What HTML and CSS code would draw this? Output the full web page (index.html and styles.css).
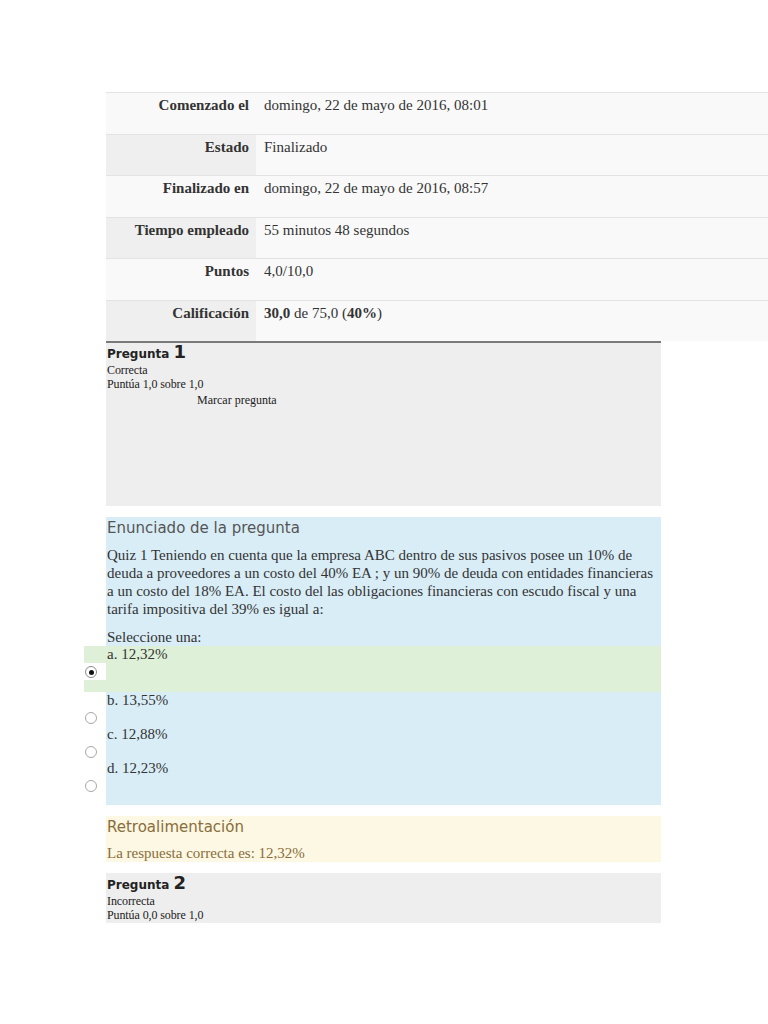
FILE: index.html
```html
<!DOCTYPE html>
<html lang="es">
<head>
<meta charset="utf-8">
<title>Revisión del intento</title>
<link rel="stylesheet" href="styles.css">
</head>
<body>
<div class="page">
  <div class="summary">
    <div class="row odd"><div class="th">Comenzado el</div><div class="td">domingo, 22 de mayo de 2016, 08:01</div></div>
    <div class="row even"><div class="th">Estado</div><div class="td">Finalizado</div></div>
    <div class="row odd"><div class="th">Finalizado en</div><div class="td">domingo, 22 de mayo de 2016, 08:57</div></div>
    <div class="row even"><div class="th">Tiempo empleado</div><div class="td">55 minutos 48 segundos</div></div>
    <div class="row odd"><div class="th">Puntos</div><div class="td">4,0/10,0</div></div>
    <div class="row even"><div class="th">Calificación</div><div class="td"><b>30,0</b> de 75,0 (<b>40%</b>)</div></div>
  </div>

  <div class="qinfo first">
    <div class="qno">Pregunta <span class="num">1</span></div>
    <div class="small">Correcta</div>
    <div class="small">Puntúa 1,0 sobre 1,0</div>
    <div class="flag">Marcar pregunta</div>
  </div>

  <div class="content">
    <div class="heading">Enunciado de la pregunta</div>
    <p class="qtext">Quiz 1 Teniendo en cuenta que la empresa ABC dentro de sus pasivos posee un 10% de deuda a proveedores a un costo del 40% EA ; y un 90% de deuda con entidades financieras a un costo del 18% EA. El costo del las obligaciones financieras con escudo fiscal y una tarifa impositiva del 39% es igual a:</p>
    <div class="prompt">Seleccione una:</div>
    <div class="answers">
      <div class="answer correct">
        <div class="label">a. 12,32%</div>
        <div class="radiobox"><span class="radio checked"></span></div>
      </div>
      <div class="answer">
        <div class="label">b. 13,55%</div>
        <div class="radiobox"><span class="radio"></span></div>
      </div>
      <div class="answer">
        <div class="label">c. 12,88%</div>
        <div class="radiobox"><span class="radio"></span></div>
      </div>
      <div class="answer">
        <div class="label">d. 12,23%</div>
        <div class="radiobox"><span class="radio"></span></div>
      </div>
    </div>
  </div>

  <div class="feedback">
    <div class="heading fb">Retroalimentación</div>
    <div class="fbtext">La respuesta correcta es: 12,32%</div>
  </div>

  <div class="qinfo second">
    <div class="qno">Pregunta <span class="num">2</span></div>
    <div class="small">Incorrecta</div>
    <div class="small">Puntúa 0,0 sobre 1,0</div>
  </div>
</div>
</body>
</html>
```

FILE: styles.css
```css
html, body {
  margin: 0;
  padding: 0;
  background: #ffffff;
  overflow: hidden;
}

body {
  font-family: "Liberation Serif", "Times New Roman", serif;
  color: #333333;
  font-size: 15px;
}

.page {
  padding-top: 92px;
  padding-left: 106px;
}

/* Summary table */
.summary {
  width: 100%;
}

.row {
  display: grid;
  grid-template-columns: 150px 1fr;
  height: 41.5px;
  box-sizing: border-box;
  border-top: 1px solid #e3e3e3;
  line-height: 18px;
}

.th {
  font-weight: bold;
  text-align: right;
  padding: 3px 7px 0 0;
  background: #f9f9f9;
}

.td {
  padding: 3px 0 0 8px;
  background: #f9f9f9;
}

.row.even .th {
  background: #efefef;
}

/* Question info block */
.qinfo {
  width: 555px;
  background: #eeeeee;
  box-sizing: border-box;
}

.qinfo.first {
  border-top: 2px solid #7a7a7a;
  height: 165px;
}

.qinfo.second {
  margin-top: 11px;
  height: 50px;
  padding-top: 1px;
}

.qno {
  font-family: "DejaVu Sans", Verdana, sans-serif;
  font-weight: bold;
  font-size: 12px;
  line-height: 18px;
  color: #222;
  padding-left: 1px;
}

.qno .num {
  font-size: 18px;
}

.small {
  font-size: 12px;
  line-height: 14px;
  color: #222;
  letter-spacing: -0.1px;
  padding-left: 1px;
}

.flag {
  font-size: 12px;
  line-height: 15px;
  color: #222;
  padding-top: 2px;
  padding-left: 91px;
}

/* Question content */
.content {
  width: 555px;
  margin-top: 11px;
  background: #d9edf7;
  padding-bottom: 11px;
}

.heading {
  font-family: "DejaVu Sans", Verdana, sans-serif;
  font-size: 15px;
  line-height: 20px;
  color: #555555;
  padding-top: 1px;
  padding-left: 1px;
}

.qtext {
  margin: 8px 0 0;
  line-height: 18px;
  padding-left: 1px;
  padding-right: 0;
}

.prompt {
  margin-top: 10px;
  line-height: 18px;
  padding-left: 1px;
}

.answers {
  margin-left: -22px;
}

.answer {
  height: 34px;
}

.answer.correct {
  height: 46px;
  background: #dff0d8;
}

.answer .label {
  padding-left: 23px;
  line-height: 17px;
}

.radiobox {
  width: 22px;
  height: 17px;
  background: #ffffff;
  position: relative;
}

.radio {
  position: absolute;
  left: 1px;
  top: 3px;
  width: 10px;
  height: 10px;
  border-radius: 50%;
  border: 1px solid #a8a8a8;
  background: #fff;
  box-sizing: content-box;
}

.radio.checked {
  border-color: #8a8a8a;
}

.radio.checked::after {
  content: "";
  position: absolute;
  left: 2.5px;
  top: 2.5px;
  width: 5px;
  height: 5px;
  border-radius: 50%;
  background: #111;
}

/* Feedback */
.feedback {
  width: 555px;
  margin-top: 11px;
  background: #fcf8e3;
  height: 46px;
}

.heading.fb {
  color: #8a6d3b;
}

.fbtext {
  margin-top: 7px;
  line-height: 18px;
  color: #8a6d3b;
  padding-left: 1px;
}
```
